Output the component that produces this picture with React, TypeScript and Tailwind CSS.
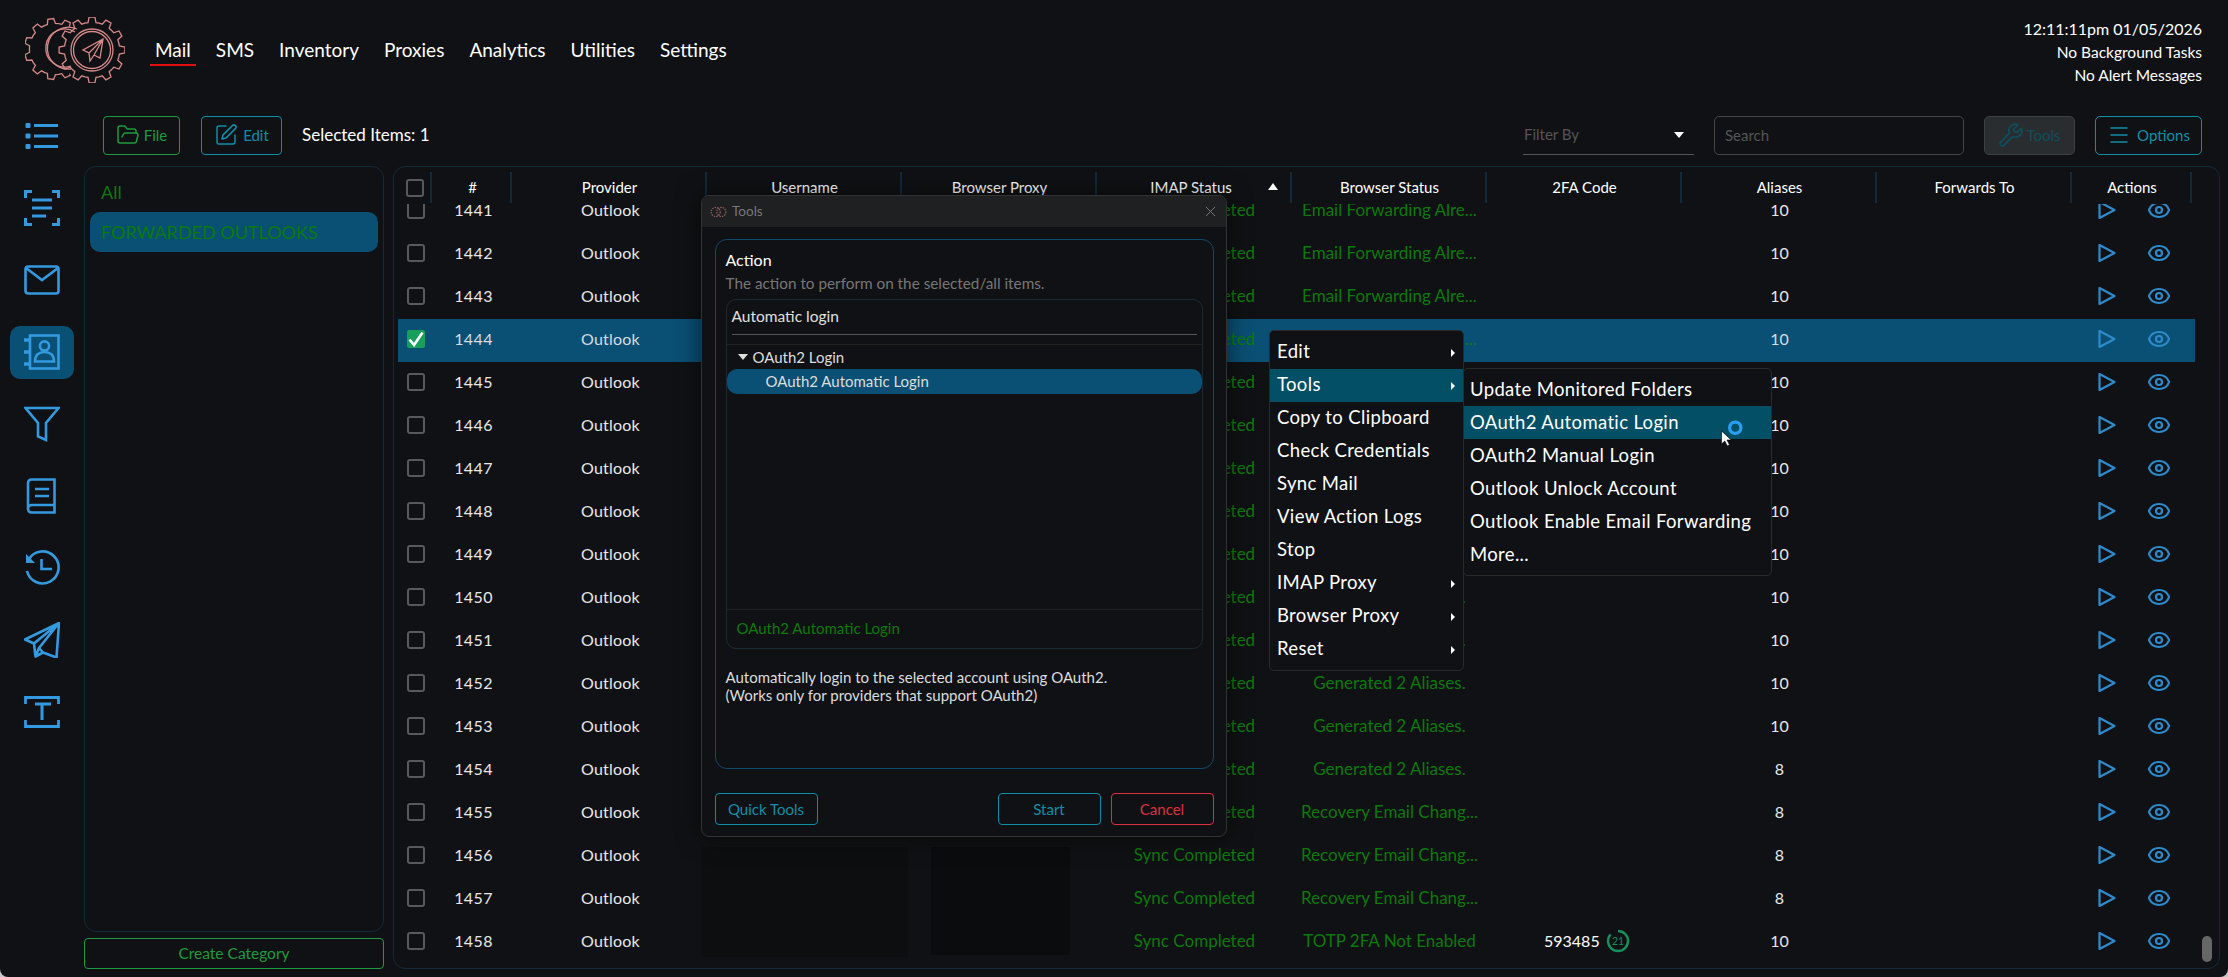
import React from "react";
import { Eye, FolderOpen, Menu, SquarePen, Wrench, X } from "lucide-react";

const navigation = ["Mail", "SMS", "Inventory", "Proxies", "Analytics", "Utilities", "Settings"];

const gearPath = (cx: number, cy: number, r: number, teeth: number) => {
  const pts: string[] = [];
  const step = (Math.PI * 2) / teeth;
  for (let i = 0; i < teeth; i++) {
    const a = i * step;
    [
      [-0.5, r * 0.84],
      [-0.28, r * 0.84],
      [-0.17, r],
      [0.17, r],
      [0.28, r * 0.84],
    ].forEach(([o, rad]) => {
      const t = a + o * step;
      pts.push(`${(cx + Math.cos(t) * rad).toFixed(1)} ${(cy + Math.sin(t) * rad).toFixed(1)}`);
    });
  }
  return "M" + pts.join("L") + "Z";
};

function Logo({ className }: { className: string }) {
  return (
    <svg viewBox="0 0 100 66" className={className} fill="none" stroke="#d88a8a" strokeWidth="1.3">
      <path d={gearPath(30, 32, 30.5, 11)} />
      <circle cx="67" cy="33" r="32.5" fill="#101114" stroke="none" />
      <path d={gearPath(67, 33, 33, 12)} />
      <circle cx="67" cy="33" r="21" />
      <circle cx="67" cy="33" r="18.5" />
      <path d="M52 12A21 21 0 1 0 46 52" />
      <path d="M50 15A19 19 0 1 0 46 49" />
      <path d="M78 22L58 33L64 36L65 44L69 38L75 41Z M78 22L64 36 M78 22L69 38" />
    </svg>
  );
}

const sideIcons = [
  <>
    <rect x="1.5" y="5" width="5" height="5" rx="1" fill="currentColor" stroke="none" />
    <rect x="1.5" y="15.5" width="5" height="5" rx="1" fill="currentColor" stroke="none" />
    <rect x="1.5" y="26" width="5" height="5" rx="1" fill="currentColor" stroke="none" />
    <path d="M10 7.5H34M10 18H34M10 28.5H34" strokeWidth="3" />
  </>,
  <>
    <path d="M8 1.5H1.5V8M28 1.5H34.5V8M1.5 28V34.5H8M34.5 28V34.5H28" strokeWidth="3" />
    <path d="M8 10H28M8 18H28M8 26H22" strokeWidth="2.8" />
  </>,
  <>
    <rect x="1.5" y="4.5" width="33" height="27" rx="2.5" />
    <path d="M2 6L18 18L34 6" />
  </>,
  <>
    <rect x="6" y="1.5" width="28.5" height="33" />
    <path d="M0 6H7M0 18H7M0 30H7" strokeWidth="3.4" />
    <circle cx="20.5" cy="12" r="4.6" />
    <path d="M11 27.5C11 21 15 18 20.5 18C26 18 30 21 30 27.5Z" />
  </>,
  <path d="M1.5 2H34.5L22 17V34L14 30.5V17Z" strokeLinejoin="miter" />,
  <>
    <path d="M30.5 27V1.5H7.5C5.5 1.5 4 3 4 5V31C4 33 5.5 34.5 7.5 34.5H30.5V27H8C5.5 27 4 28.5 4 31" />
    <path d="M11 11H25M11 18H25" />
  </>,
  <>
    <path d="M5 9A16 16 0 1 1 3 21" strokeWidth="2.6" />
    <path d="M2 4V13H11Z" fill="currentColor" stroke="none" />
    <path d="M17.5 9V19H28" strokeWidth="2.6" />
  </>,
  <path d="M35 1L1 17.5L10 21.5L11.5 34.5L19 30.5L32.5 35.5Z M35 1L10 21.5 M35 1L15 26L19 30.5 M15 26L11.5 34.5" strokeLinejoin="round" />,
  <>
    <path d="M1.5 10V3.5H34.5V10M1.5 26V32.5H34.5V26" strokeWidth="2.8" />
    <path d="M11 10H27M18 10V26" strokeWidth="3" />
  </>,
];

type Row = { id: number; status: string; code?: boolean; aliases: number };

const rows: Row[] = [
  ...[1441, 1442, 1443, 1444].map((id) => ({ id, status: "Email Forwarding Alre...", aliases: 10 })),
  ...[1445, 1446, 1447, 1448, 1449, 1450, 1451, 1452, 1453].map((id) => ({ id, status: "Generated 2 Aliases.", aliases: 10 })),
  { id: 1454, status: "Generated 2 Aliases.", aliases: 8 },
  ...[1455, 1456, 1457].map((id) => ({ id, status: "Recovery Email Chang...", aliases: 8 })),
  { id: 1458, status: "TOTP 2FA Not Enabled", code: true, aliases: 10 },
];

const headers = ["#", "Provider", "Username", "Browser Proxy", "IMAP Status", "Browser Status", "2FA Code", "Aliases", "Forwards To", "Actions"];

const menuItems = [
  { name: "Edit", sub: true },
  { name: "Tools", sub: true, active: true },
  { name: "Copy to Clipboard" },
  { name: "Check Credentials" },
  { name: "Sync Mail" },
  { name: "View Action Logs" },
  { name: "Stop" },
  { name: "IMAP Proxy", sub: true },
  { name: "Browser Proxy", sub: true },
  { name: "Reset", sub: true },
];

const subItems = ["Update Monitored Folders", "OAuth2 Automatic Login", "OAuth2 Manual Login", "Outlook Unlock Account", "Outlook Enable Email Forwarding", "More..."];

function Check({ on }: { on?: boolean }) {
  if (on) {
    return (
      <span className="flex h-[18px] w-[18px] items-center justify-center rounded-[2px] bg-[#16a05a]">
        <svg viewBox="0 0 18 18" className="h-[18px] w-[18px]" fill="none" stroke="#fff" strokeWidth="2.6">
          <path d="M2.5 9.5L7 15L15.5 2.5" />
        </svg>
      </span>
    );
  }
  return <span className="block h-[18px] w-[18px] rounded-[3px] border-2 border-[#58595c]" />;
}

function PlayIcon() {
  return (
    <svg viewBox="0 0 18 18" className="h-[18px] w-[18px]" fill="none" stroke="#2d8bcc" strokeWidth="2.2" strokeLinejoin="round">
      <path d="M1.5 1L16.5 9L1.5 17Z" />
    </svg>
  );
}

export default function App() {
  return (
    <div className="h-[977px] w-[2228px] overflow-hidden bg-[#c8c8c8] font-['Lato',sans-serif]">
      <div className="relative flex h-[977px] w-full flex-col overflow-hidden rounded-b-[8px] bg-[#101114] text-white">
        <header className="flex h-[100px] shrink-0 pl-[25px] pr-[26px] pt-[17px]">
          <Logo className="h-[66px] w-[100px]" />
          <nav className="ml-[30px] flex gap-[25px] pt-[20px] text-[19px] leading-[26px]">
            {navigation.map((item, i) => (
              <div key={item} className="relative h-[26px] whitespace-nowrap">
                {item}
                {i === 0 && <span className="absolute -left-[5px] -right-[5px] top-[27px] h-[2px] bg-[#e01010]" />}
              </div>
            ))}
          </nav>
          <div className="ml-auto flex flex-col items-end text-[15.5px] leading-[23px]">
            <div className="-mt-[1px] text-[16px] leading-[25px]">12:11:11pm 01/05/2026</div>
            <div>No Background Tasks</div>
            <div>No Alert Messages</div>
          </div>
        </header>

        <div className="flex min-h-0 flex-1">
          <aside className="flex h-full w-[84px] shrink-0 flex-col text-[#339ae0]">
            {sideIcons.map((icon, i) => (
              <div key={i} className="flex h-[72px] items-center justify-center">
                <div className={`flex h-[53px] w-16 items-center justify-center rounded-[10px] ${i === 3 ? "bg-[#0a4f74]" : ""}`}>
                  <svg viewBox="0 0 36 36" className="h-9 w-9" fill="none" stroke="currentColor" strokeWidth="2.6">
                    {icon}
                  </svg>
                </div>
              </div>
            ))}
          </aside>

          <main className="flex min-w-0 flex-1 flex-col pb-2 pr-2 pt-[15px]">
            <div className="flex h-[40px] shrink-0 items-center pl-[19px] pr-[18px] text-[15px]">
              <button className="flex h-[39px] w-[77px] items-center justify-center gap-[4px] rounded-[4px] border border-[#1f9a3e] text-[#1f9a3e]">
                <FolderOpen className="h-[24px] w-[24px]" strokeWidth={1.5} />
                File
              </button>
              <button className="ml-[21px] flex h-[39px] w-[81px] items-center justify-center gap-[5px] rounded-[4px] border border-[#0e8fa8] text-[#0e8fa8]">
                <SquarePen className="h-[24px] w-[24px]" strokeWidth={1.5} />
                Edit
              </button>
              <div className="ml-[20px] text-[17px]">Selected Items: 1</div>
              <div className="relative ml-auto flex h-[39px] w-[171px] items-center border-b border-[#555] px-[1px] text-[#555]">
                Filter By
                <span className="absolute right-[10px] top-[16px] h-0 w-0 border-x-[5px] border-t-[6px] border-x-transparent border-t-white" />
              </div>
              <div className="ml-[20px] flex h-[39px] w-[250px] items-center rounded-[5px] border border-[#444] px-[10px] text-[#555]">Search</div>
              <button className="ml-[20px] flex h-[39px] w-[91px] items-center justify-center gap-[2px] rounded-[5px] border border-[#3a4044] bg-[#2a2d30] text-[#0d4f5e]">
                <Wrench className="h-[26px] w-[26px]" strokeWidth={1.5} />
                Tools
              </button>
              <button className="ml-[20px] flex h-[39px] w-[107px] items-center justify-center gap-[6px] rounded-[5px] border border-[#0e8fa8] text-[#0e8fa8]">
                <Menu className="h-[24px] w-[24px]" strokeWidth={1.5} />
                Options
              </button>
            </div>

            <div className="mt-[11px] flex min-h-0 flex-1 gap-[9px]">
              <section className="flex w-[300px] shrink-0 flex-col gap-[6px]">
                <div className="min-h-0 flex-1 rounded-[12px] border border-[#14293a] px-[5px] pt-[13px]">
                  <div className="h-[32px] pl-[11px] text-[18px] leading-[24px] text-[#0b7a0b]">All</div>
                  <div className="flex h-[40px] items-center rounded-[10px] bg-[#0a4f74] pl-[11px] text-[18px] text-[#0b7a0b]">FORWARDED OUTLOOKS</div>
                </div>
                <button className="h-[31px] rounded-[4px] border border-[#1f9a3e] text-[15.5px] text-[#1f9a3e]">Create Category</button>
              </section>

              <section className="relative flex min-w-0 flex-1 flex-col rounded-[12px] border border-[#14293a] pl-[4px] pt-[5px]">
                <div className="grid h-[32px] shrink-0 grid-cols-[34px_80px_repeat(8,195px)_120px] pb-[1px] text-[15px]">
                  <div className="flex items-center justify-center border-r-2 border-[#12293a] pl-[1px]">
                    <Check />
                  </div>
                  {headers.map((h) => (
                    <div key={h} className={`relative flex items-center justify-center border-r-2 border-[#12293a] ${h === "IMAP Status" ? "pr-[5px]" : h === "#" ? "pl-[3px]" : "pl-[2px]"}`}>
                      {h}
                      {h === "IMAP Status" && <span className="absolute right-[12px] top-[11px] h-0 w-0 border-x-[5px] border-b-[7px] border-x-transparent border-b-white" />}
                    </div>
                  ))}
                </div>
                <div className="min-h-0 flex-1 overflow-hidden">
                  <div className="-mt-[14px] text-[16px]">
                    {rows.map((r) => (
                      <div
                        key={r.id}
                        className={`grid h-[43px] w-[1797px] grid-cols-[34px_80px_repeat(8,195px)_120px_3px] items-center ${r.id === 1444 ? "bg-[#0a4f74] text-[#d5dde2]" : "text-[#e8e8e8]"}`}
                      >
                        <div className="flex justify-center pl-[1px] pb-[3px]">
                          <Check on={r.id === 1444} />
                        </div>
                        <div className="pb-[3px] pl-[3px] text-center tracking-[0.4px]">{r.id}</div>
                        <div className="pb-[3px] pl-[2px] text-center tracking-[0.2px]">Outlook</div>
                        <div />
                        <div />
                        <div className="pb-[3px] text-center text-[17px] text-[#0b7a0b]">Sync Completed</div>
                        <div className="pb-[3px] text-center text-[17px] text-[#0b7a0b]">{r.status}</div>
                        <div className="flex items-center gap-[6px] pb-[3px] pl-[57px]">
                          {r.code && (
                            <>
                              <span className="text-white">593485</span>
                              <svg viewBox="0 0 24 24" className="h-6 w-6">
                                <circle cx="12" cy="12" r="10" fill="none" stroke="#14905a" strokeWidth="2.4" strokeDasharray="54 63" transform="rotate(-90 12 12)" />
                                <text x="12" y="16" textAnchor="middle" fontSize="10.5" fill="#14905a">21</text>
                              </svg>
                            </>
                          )}
                        </div>
                        <div className="pb-[3px] text-center">{r.aliases}</div>
                        <div />
                        <div className="flex items-center justify-center gap-[31px] pb-[3px] pl-[5px]">
                          <PlayIcon />
                          <Eye className="h-[24px] w-[24px] text-[#2d8bcc]" strokeWidth={2.2} />
                        </div>
                      </div>
                    ))}
                  </div>
                </div>
                <span className="absolute left-[1808px] top-[769px] h-[26px] w-[10px] rounded-full bg-[#666]" />
                <span className="absolute left-[307px] top-[680px] h-[110px] w-[207px] bg-[#0d0e10]" />
                <span className="absolute left-[537px] top-[680px] h-[108px] w-[139px] bg-[#0b0c0e]" />
              </section>
            </div>
          </main>
        </div>

        {/* Tools dialog */}
        <div className="absolute left-[701px] top-[195px] flex h-[642px] w-[526px] flex-col rounded-[8px] border border-[#333] bg-[#101114] shadow-[0_0_24px_rgba(0,0,0,0.55)]">
          <div className="flex h-[31px] shrink-0 items-center rounded-t-[8px] bg-[#1f2022] px-[8px] text-[13.5px] text-[#777]">
            <svg viewBox="0 0 18 12" className="mr-[5px] h-[12px] w-[17px]" fill="none" stroke="#8a5a5a" strokeWidth="1.3">
              <circle cx="6" cy="6" r="4.8" strokeDasharray="1.6 1" />
              <circle cx="12" cy="6" r="4.8" strokeDasharray="1.6 1" />
            </svg>
            Tools
            <X className="ml-auto -mr-[1px] h-[17px] w-[17px] text-[#777]" strokeWidth={1.4} />
          </div>
          <div className="mx-[12.5px] mt-[12px] flex h-[530px] flex-col rounded-[12px] border border-[#0e4a6b] px-[10px] pt-[9px]">
            <div className="text-[16px] leading-[21px]">Action</div>
            <div className="mt-[3px] text-[15.3px] leading-[20px] text-[#777]">The action to perform on the selected/all items.</div>
            <div className="mt-[6px] flex h-[350px] flex-col rounded-[10px] border border-[#1a2a35]">
              <div className="mx-[5px] flex h-[35px] shrink-0 items-center border-b border-[#555] text-[15.5px] text-[#e0e0e0]">Automatic login</div>
              <div className="mt-[9px] flex min-h-0 flex-1 flex-col border-y border-[#222]">
                <div className="flex h-[24px] shrink-0 items-center pl-[11px] text-[15px] text-[#ddd]">
                  <span className="mr-[5px] h-0 w-0 border-x-[5px] border-t-[6px] border-x-transparent border-t-[#ddd]" />
                  OAuth2 Login
                </div>
                <div className="flex h-[25px] shrink-0 items-center rounded-[10px] bg-[#0a4f74] pl-[39px] text-[15px] text-[#ddd]">OAuth2 Automatic Login</div>
              </div>
              <div className="flex h-[38px] shrink-0 items-center pb-[2px] pl-[10px] text-[15px] text-[#0b7a0b]">OAuth2 Automatic Login</div>
            </div>
            <div className="mt-[19px] text-[15px] leading-[18px] text-[#ddd]">
              Automatically login to the selected account using OAuth2.
              <br />
              (Works only for providers that support OAuth2)
            </div>
          </div>
          <div className="mx-[12.5px] mt-[24px] flex text-[15px]">
            <button className="h-[32px] w-[103px] rounded-[4px] border border-[#0e8fa8] text-[#0e8fa8]">Quick Tools</button>
            <button className="ml-auto h-[32px] w-[103px] rounded-[4px] border border-[#0e8fa8] text-[#0e8fa8]">Start</button>
            <button className="ml-[10px] h-[32px] w-[103px] rounded-[4px] border border-[#dc2f3e] text-[#dc2f3e]">Cancel</button>
          </div>
        </div>

        {/* Context menu */}
        <div className="absolute left-[1269px] top-[330px] w-[195px] rounded-[5px] border border-[#2a2a2a] bg-[#101114] py-[4.5px] text-[18.5px] tracking-[0.35px]">
          {menuItems.map((m) => (
            <div key={m.name} className={`relative flex h-[33px] items-center pl-[7px] ${m.active ? "bg-[#024f66]" : ""}`}>
              {m.name}
              {m.sub && <span className="absolute right-[8px] top-[13px] h-0 w-0 border-y-[4px] border-l-[4px] border-y-transparent border-l-white" />}
            </div>
          ))}
        </div>
        <div className="absolute left-[1463px] top-[368px] w-[309px] rounded-[5px] border border-[#2a2a2a] bg-[#101114] py-[4px] text-[18.5px] tracking-[0.35px]">
          {subItems.map((m, i) => (
            <div key={m} className={`flex h-[33px] items-center pl-[6px] ${i === 1 ? "bg-[#024f66]" : ""}`}>
              {m}
            </div>
          ))}
        </div>

        {/* Busy cursor */}
        <svg viewBox="0 0 30 24" className="absolute left-[1720px] top-[419px] h-[30px] w-[38px]">
          <circle cx="12" cy="7" r="4.5" fill="none" stroke="#2a9df4" strokeWidth="2.6" />
          <path d="M1 9.5V20L3.6 17.6L5.6 21.5L7.4 20.6L5.4 16.8H8.8Z" fill="#fff" stroke="#000" strokeWidth="0.5" />
        </svg>
      </div>
    </div>
  );
}
